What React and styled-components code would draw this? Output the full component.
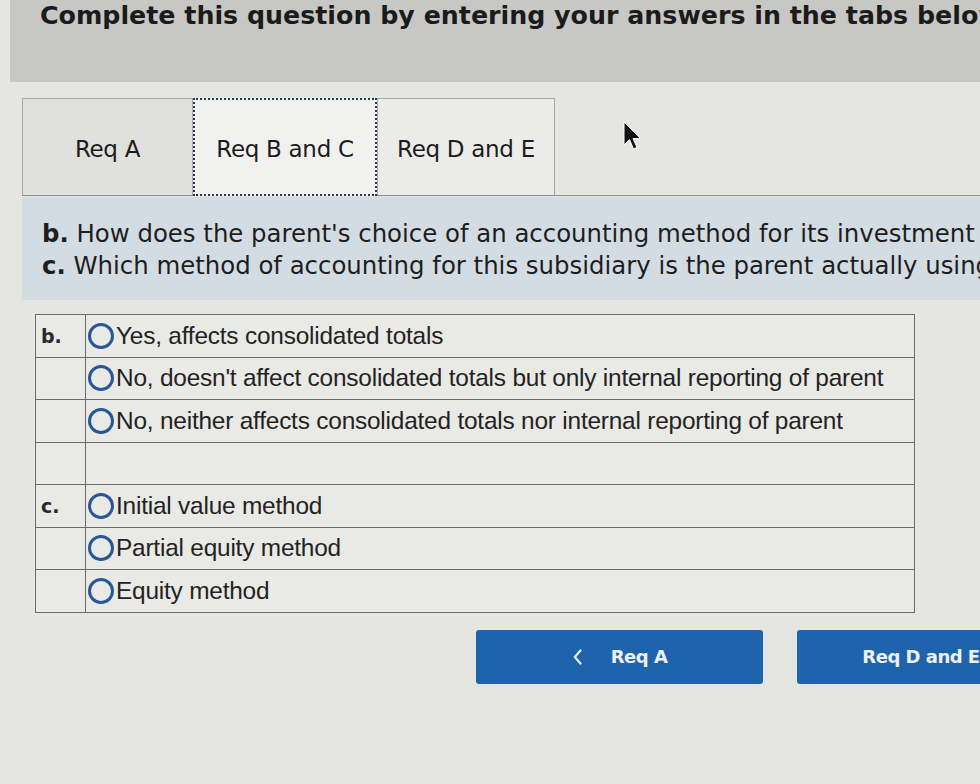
import React from 'react';
import styled, { createGlobalStyle } from 'styled-components';

const GlobalStyle = createGlobalStyle`
    body {
        margin: 0;
        background: #e5e5e2;
        overflow: hidden;
    }
`;

const bOptions = [
    'Yes, affects consolidated totals',
    "No, doesn't affect consolidated totals but only internal reporting of parent",
    'No, neither affects consolidated totals nor internal reporting of parent',
];

const cOptions = ['Initial value method', 'Partial equity method', 'Equity method'];

const Radio = () => <Circle />;

const OptionRow = ({ label, text }) => (
    <tr>
        <LabelCell>{label}</LabelCell>
        <AnswerCell>
            {text && (
                <Option>
                    <Radio />
                    <span>{text}</span>
                </Option>
            )}
        </AnswerCell>
    </tr>
);

const Chevron = ({ flip }) => (
    <ChevronSvg viewBox="0 0 12 20">
        <path d={flip ? 'M2 2 L9 10 L2 18' : 'M10 2 L3 10 L10 18'} fill="none" stroke="#e8eef7" strokeWidth="2.4" />
    </ChevronSvg>
);

const App = () => {
    return (
        <Page>
            <GlobalStyle />
            <Header>
                <Title>Complete this question by entering your answers in the tabs below.</Title>
            </Header>
            <Content>
                <Tabs>
                    <Tab w={171}>Req A</Tab>
                    <Tab w={184} active>Req B and C</Tab>
                    <Tab w={178} light>Req D and E</Tab>
                </Tabs>
                <Question>
                    <p><b>b.</b> How does the parent's choice of an accounting method for its investment affect the consolidated totals?</p>
                    <p><b>c.</b> Which method of accounting for this subsidiary is the parent actually using for internal reporting purposes?</p>
                </Question>
                <Table>
                    <tbody>
                        {bOptions.map((t, i) => (
                            <OptionRow key={t} label={i === 0 ? 'b.' : ''} text={t} />
                        ))}
                        <OptionRow label="" text="" />
                        {cOptions.map((t, i) => (
                            <OptionRow key={t} label={i === 0 ? 'c.' : ''} text={t} />
                        ))}
                    </tbody>
                </Table>
                <Buttons>
                    <NavButton>
                        <Chevron />
                        Req A
                    </NavButton>
                    <NavButton>
                        Req D and E
                        <Chevron flip />
                    </NavButton>
                </Buttons>
            </Content>
            <Cursor viewBox="0 0 20 30">
                <path d="M2 1 L2 24 L7.5 18.5 L11.5 28 L15 26.5 L11 17.5 L18.5 17.5 Z" fill="#111" stroke="#fff" strokeWidth="1" />
            </Cursor>
        </Page>
    );
};

export default App;

const Page = styled.div`
    position: relative;
    width: 980px;
    height: 784px;
    overflow: hidden;
    padding-left: 10px;
    box-sizing: border-box;
`;

const Header = styled.div`
    height: 82px;
    background: #c7c7c5;
    padding: 1px 0 0 30px;
    box-sizing: border-box;
    white-space: nowrap;
`;

const Title = styled.h1`
    margin: 0;
    font-family: "DejaVu Sans", sans-serif;
    font-weight: 700;
    font-size: 25.3px;
    color: #1b1b1b;
`;

const Content = styled.div`
    padding: 16px 0 0 12px;
`;

const Tabs = styled.div`
    display: flex;
    height: 97px;
    border-bottom: 1px solid #8d8d8b;
`;

const Tab = styled.div`
    width: ${p => p.w}px;
    display: flex;
    align-items: center;
    justify-content: center;
    padding-top: 4px;
    box-sizing: border-box;
    font-family: "DejaVu Sans", sans-serif;
    font-size: 23px;
    letter-spacing: -0.3px;
    color: #1c1c1c;
    background: ${p => (p.active ? '#f1f1ef' : p.light ? '#ebebe9' : '#e0e0de')};
    border: ${p => (p.active ? '2px dotted #2d3560' : '1px solid #a8a8a6')};
    border-bottom: ${p => (p.active ? '2px dotted #2d3560' : 'none')};
    margin-bottom: ${p => (p.active ? '-1px' : '0')};
`;

const Question = styled.div`
    margin-top: 1px;
    height: 103px;
    background: #d3dce3;
    padding: 21px 0 0 20px;
    box-sizing: border-box;
    white-space: nowrap;
    font-family: "DejaVu Sans", sans-serif;
    font-size: 24.4px;
    color: #1e1e1e;

    p {
        margin: 0;
        line-height: 32px;
    }
`;

const Table = styled.table`
    margin: 14px 0 0 13px;
    width: 880px;
    border-collapse: collapse;
    background: #e9e9e6;
`;

const LabelCell = styled.td`
    width: 50px;
    height: 41.5px;
    padding: 0 0 0 5px;
    border: 1px solid #6c6c6a;
    font-family: "DejaVu Sans", sans-serif;
    font-weight: 700;
    font-size: 19px;
    color: #2a2a2a;
    vertical-align: middle;
    box-sizing: border-box;
`;

const AnswerCell = styled.td`
    height: 41.5px;
    padding: 0 0 0 2px;
    border: 1px solid #6c6c6a;
    vertical-align: middle;
`;

const Option = styled.div`
    display: flex;
    align-items: center;
    gap: 2px;
    font-family: "Liberation Sans", Arial, sans-serif;
    font-size: 24.4px;
    letter-spacing: -0.2px;
    color: #232323;
    white-space: nowrap;
`;

const Circle = styled.span`
    width: 26px;
    height: 26px;
    border: 3px solid #29579b;
    border-radius: 50%;
    box-sizing: border-box;
    flex-shrink: 0;
`;

const Buttons = styled.div`
    display: flex;
    gap: 34px;
    margin-top: 17px;
    padding-left: 454px;
`;

const NavButton = styled.div`
    width: 287px;
    height: 54px;
    flex-shrink: 0;
    display: flex;
    align-items: center;
    justify-content: center;
    gap: 28px;
    background: #1f63ad;
    border-radius: 3px;
    font-family: "DejaVu Sans", sans-serif;
    font-weight: 700;
    font-size: 18px;
    letter-spacing: -0.5px;
    color: #edf1f7;
`;

const ChevronSvg = styled.svg`
    width: 11px;
    height: 18px;
`;

const Cursor = styled.svg`
    position: absolute;
    left: 622px;
    top: 121px;
    width: 20px;
    height: 30px;
`;
